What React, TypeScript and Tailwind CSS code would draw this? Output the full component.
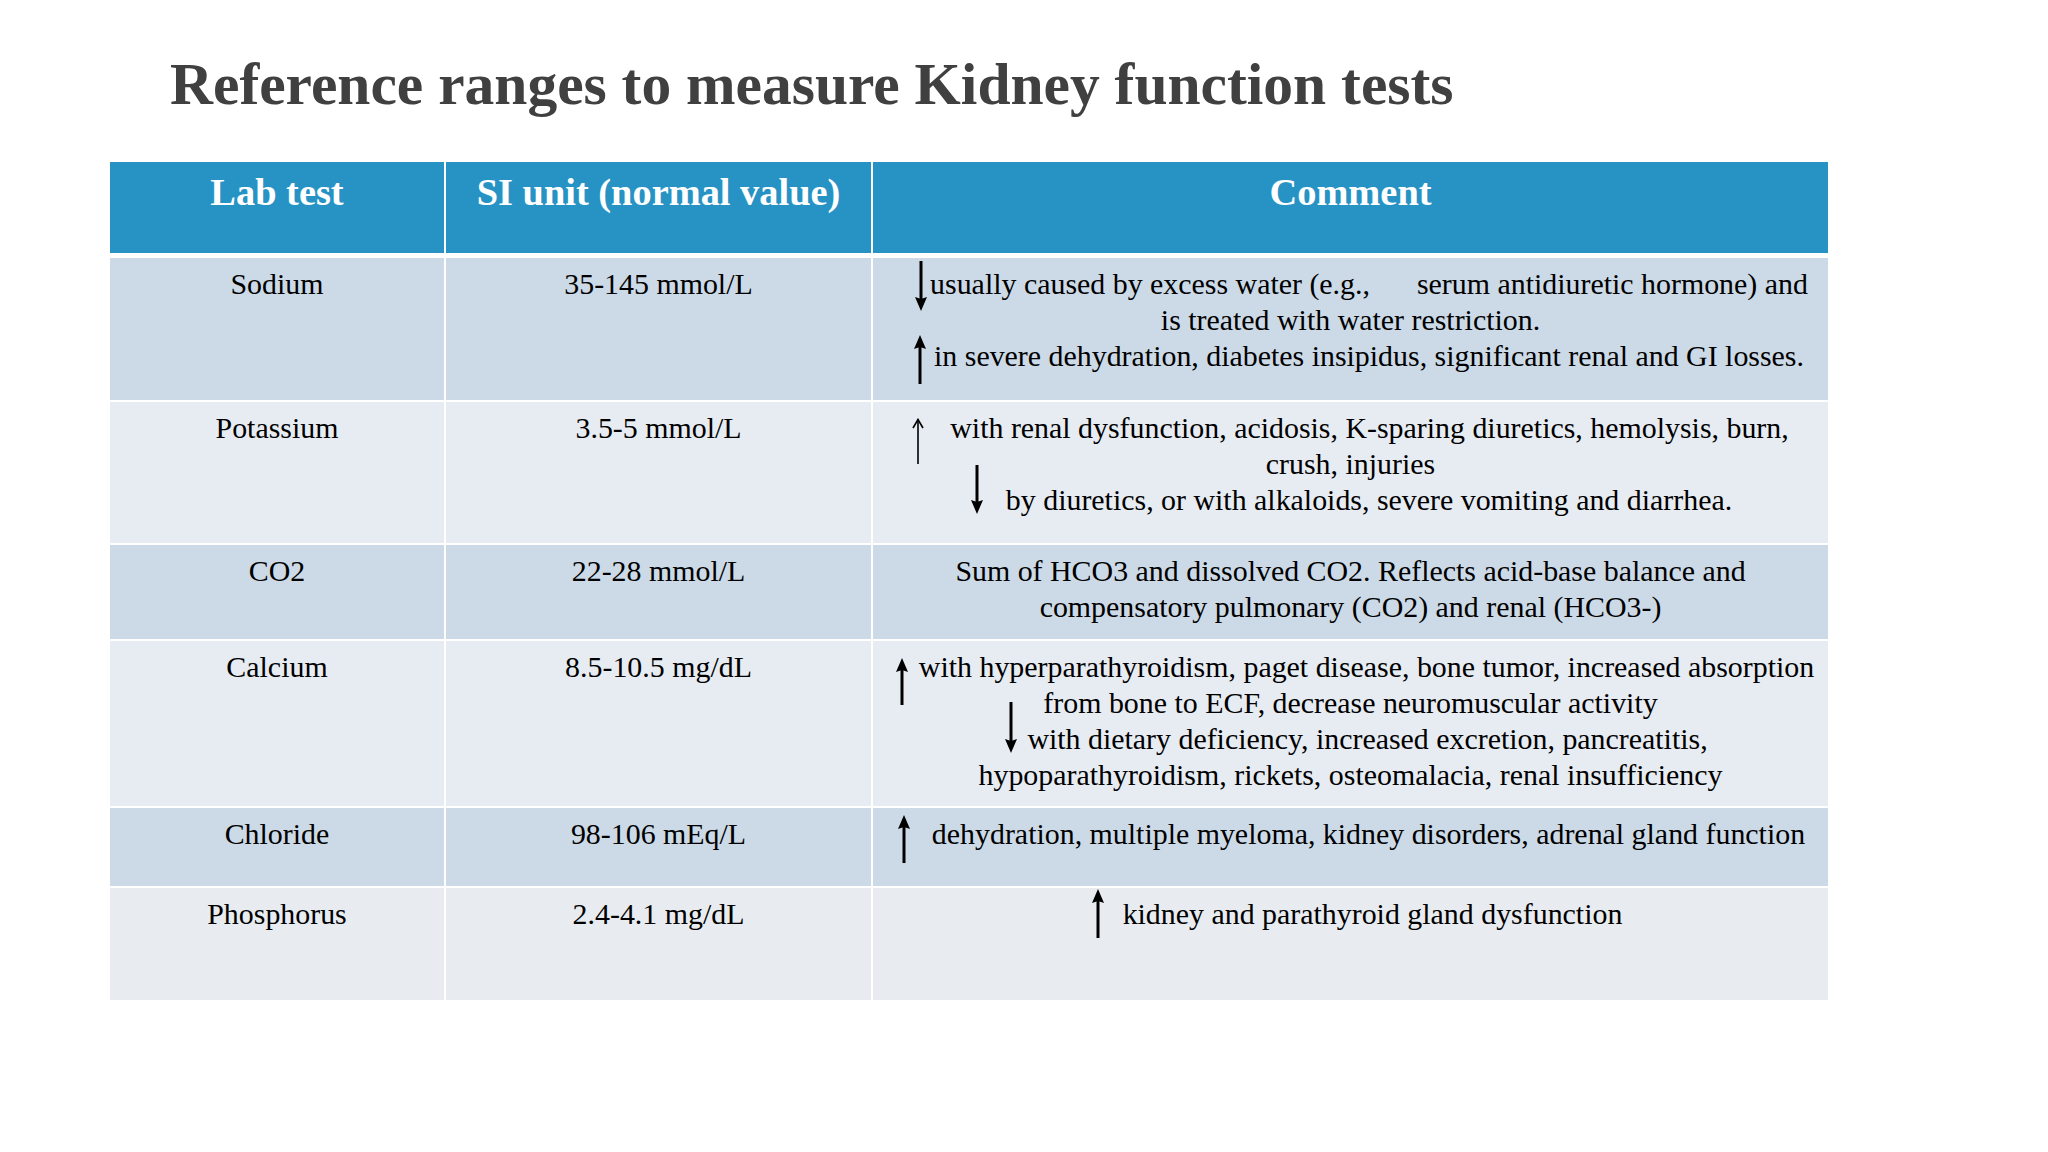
import type { ReactNode } from "react";

type Line = { pad?: number; text: ReactNode };
type ArrowSpec = { x: number; y: number; len: number; dir: "up" | "down"; thin?: boolean };
type Row = { test: string; unit: string; h: string; bg: string; lines: Line[]; arrows: ArrowSpec[] };

const DARK = "bg-[#ccdae7]";
const LIGHT = "bg-[#e7ecf3]";

const rows: Row[] = [
  {
    test: "Sodium", unit: "35-145 mmol/L", h: "h-[142px]", bg: DARK,
    lines: [
      { pad: 37, text: <>{"usually caused by excess water (e.g., "}<span className="inline-block w-[32px]" />{" serum antidiuretic hormone) and"}</> },
      { text: "is treated with water restriction." },
      { pad: 37, text: "in severe dehydration, diabetes insipidus, significant renal and GI losses." },
    ],
    arrows: [
      { x: 48, y: 3, len: 50, dir: "down" },
      { x: 47, y: 77, len: 49, dir: "up" },
    ],
  },
  {
    test: "Potassium", unit: "3.5-5 mmol/L", h: "h-[141px]", bg: LIGHT,
    lines: [
      { pad: 38, text: "with renal dysfunction, acidosis, K-sparing diuretics, hemolysis, burn," },
      { text: "crush, injuries" },
      { pad: 37, text: "by diuretics, or with alkaloids, severe vomiting and diarrhea." },
    ],
    arrows: [
      { x: 45, y: 16, len: 46, dir: "up", thin: true },
      { x: 104, y: 63, len: 49, dir: "down" },
    ],
  },
  {
    test: "CO2", unit: "22-28 mmol/L", h: "h-[94px]", bg: DARK,
    lines: [
      { text: "Sum of HCO3 and dissolved CO2. Reflects acid-base balance and" },
      { text: "compensatory pulmonary (CO2) and renal (HCO3-)" },
    ],
    arrows: [],
  },
  {
    test: "Calcium", unit: "8.5-10.5 mg/dL", h: "h-[165px]", bg: LIGHT,
    lines: [
      { pad: 32, text: "with hyperparathyroidism, paget disease, bone tumor, increased absorption" },
      { text: "from bone to ECF, decrease neuromuscular activity" },
      { pad: 34, text: "with dietary deficiency, increased excretion, pancreatitis," },
      { text: "hypoparathyroidism, rickets, osteomalacia, renal insufficiency" },
    ],
    arrows: [
      { x: 29, y: 17, len: 47, dir: "up" },
      { x: 138, y: 61, len: 51, dir: "down" },
    ],
  },
  {
    test: "Chloride", unit: "98-106 mEq/L", h: "h-[78px]", bg: DARK,
    lines: [{ pad: 36, text: "dehydration, multiple myeloma, kidney disorders, adrenal gland function" }],
    arrows: [{ x: 31, y: 7, len: 48, dir: "up" }],
  },
  {
    test: "Phosphorus", unit: "2.4-4.1 mg/dL", h: "h-[112px]", bg: "bg-[#e8ecf1]",
    lines: [{ pad: 44, text: "kidney and parathyroid gland dysfunction" }],
    arrows: [{ x: 225, y: 1, len: 49, dir: "up" }],
  },
];

function Arrow({ x, y, len, dir, thin }: ArrowSpec) {
  const w = 16;
  const c = w / 2;
  return (
    <svg className="absolute" style={{ left: x - c, top: y }} width={w} height={len} viewBox={`0 0 ${w} ${len}`}>
      {thin ? (
        <g stroke="#000" strokeWidth="1.6" fill="none">
          <line x1={c} y1={1} x2={c} y2={len} />
          <polyline points={`${c - 5},10 ${c},1.5 ${c + 5},10`} />
        </g>
      ) : dir === "up" ? (
        <g>
          <line x1={c} y1={11} x2={c} y2={len} stroke="#000" strokeWidth="3" />
          <polygon points={`${c},0 ${c - 6},14 ${c},12 ${c + 6},14`} fill="#000" />
        </g>
      ) : (
        <g>
          <line x1={c} y1={0} x2={c} y2={len - 11} stroke="#000" strokeWidth="3" />
          <polygon points={`${c},${len} ${c - 6},${len - 14} ${c},${len - 12} ${c + 6},${len - 14}`} fill="#000" />
        </g>
      )}
    </svg>
  );
}

export default function App() {
  return (
    <div className="w-[2048px] h-[1152px] bg-white font-['Liberation_Serif','Times_New_Roman',serif] text-black overflow-hidden">
      <h1 className="pl-[170px] pt-[50px] text-[59.5px] leading-[69px] font-bold text-[#404040] whitespace-nowrap">
        Reference ranges to measure Kidney function tests
      </h1>

      <div className="ml-[110px] mt-[43px] w-[1718px] flex flex-col">
        <div className="grid grid-cols-[334px_425px_955px] gap-x-[2px] h-[91px] bg-white">
          {["Lab test", "SI unit (normal value)", "Comment"].map((t) => (
            <div key={t} className="bg-[#2793c4] pt-[8px] text-center text-white font-bold text-[38.4px] leading-[44px]">
              {t}
            </div>
          ))}
        </div>

        <div className="mt-[5px] flex flex-col gap-y-[2px]">
          {rows.map((r) => (
            <div key={r.test} className={`grid grid-cols-[334px_425px_955px] gap-x-[2px] ${r.h}`}>
              <div className={`${r.bg} pt-[8px] text-center text-[29.9px] leading-[36px]`}>{r.test}</div>
              <div className={`${r.bg} pt-[8px] text-center text-[29.9px] leading-[36px]`}>{r.unit}</div>
              <div className={`${r.bg} relative pt-[8px] text-[29.9px] leading-[36px]`}>
                {r.lines.map((l, i) => (
                  <div key={i} className="text-center whitespace-nowrap">
                    {l.pad ? <span className="inline-block" style={{ width: l.pad }} /> : null}
                    {l.text}
                  </div>
                ))}
                {r.arrows.map((a, i) => (
                  <Arrow key={i} {...a} />
                ))}
              </div>
            </div>
          ))}
        </div>
      </div>
    </div>
  );
}
